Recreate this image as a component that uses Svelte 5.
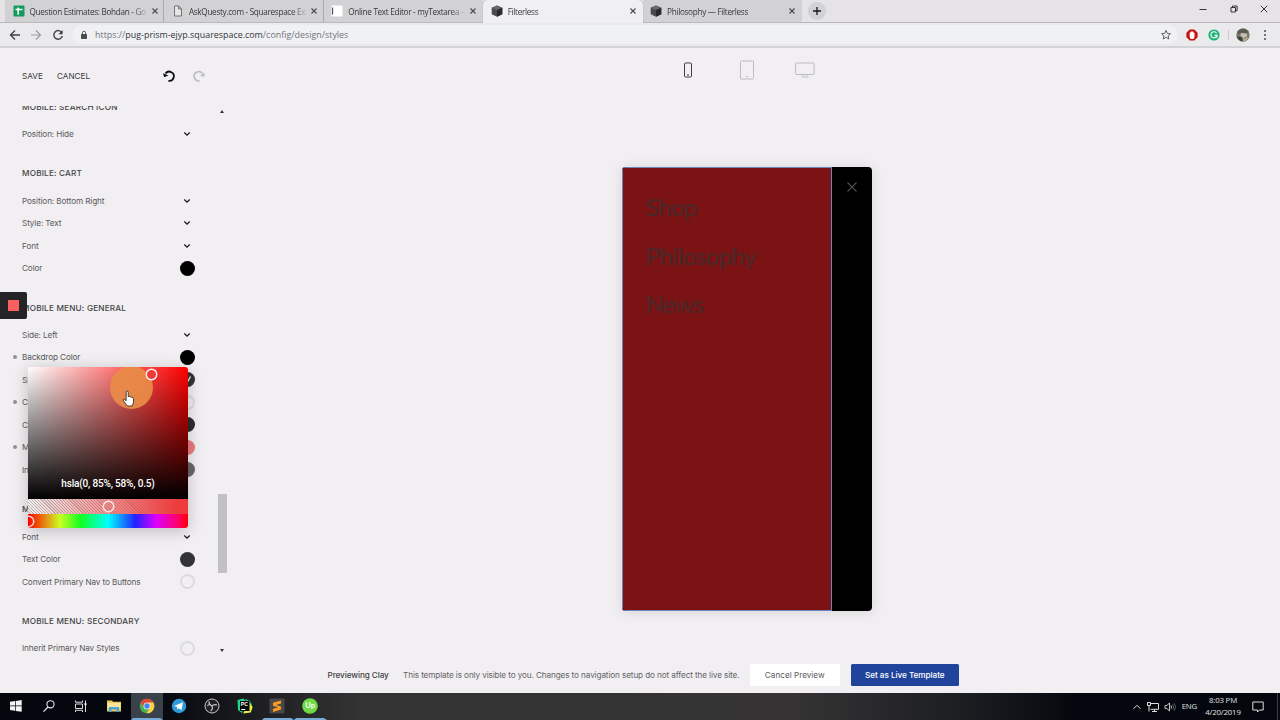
<script lang="ts">
  type Row = {
    label: string;
    kind: "arrow" | "swatch" | "check";
    color?: string;
    changed?: boolean;
    ticked?: boolean;
  };

  type Section = { title: string; rows: Row[] };

  const tabs = [
    { title: "Question Estimates: Bohdan - Go", icon: "sheets" },
    { title: "AskQuesty.com - Squarespace Ex", icon: "file" },
    { title: "Online Text Editor - myTextarea -", icon: "blank" },
    { title: "Filterless", icon: "cube", active: true },
    { title: "Philosophy — Filterless", icon: "cube" },
  ];

  const sections: Section[] = [
    {
      title: "Mobile: Search Icon",
      rows: [{ label: "Position: Hide", kind: "arrow" }],
    },
    {
      title: "Mobile: Cart",
      rows: [
        { label: "Position: Bottom Right", kind: "arrow" },
        { label: "Style: Text", kind: "arrow" },
        { label: "Font", kind: "arrow" },
        { label: "Color", kind: "swatch", color: "#000" },
      ],
    },
    {
      title: "Mobile Menu: General",
      rows: [
        { label: "Side: Left", kind: "arrow" },
        { label: "Backdrop Color", kind: "swatch", color: "#000", changed: true },
        { label: "Sl", kind: "swatch", color: "#333235", ticked: true },
        { label: "C", kind: "check", changed: true },
        { label: "C", kind: "swatch", color: "#2d2c2f" },
        { label: "M", kind: "swatch", color: "#ea7a7f", changed: true },
        { label: "In", kind: "swatch", color: "#68676a" },
      ],
    },
    {
      title: "M",
      rows: [
        { label: "Font", kind: "arrow" },
        { label: "Text Color", kind: "swatch", color: "#333235" },
        { label: "Convert Primary Nav to Buttons", kind: "check" },
      ],
    },
    {
      title: "Mobile Menu: Secondary",
      rows: [{ label: "Inherit Primary Nav Styles", kind: "check" }],
    },
  ];

  const menu = ["Shop", "Philosophy", "News"];

  const apps = [
    { name: "start" },
    { name: "search" },
    { name: "tasks" },
    { name: "explorer" },
    { name: "chrome", running: true, focused: true },
    { name: "telegram" },
    { name: "obs" },
    { name: "pycharm" },
    { name: "sublime", running: true },
    { name: "upwork", running: true },
  ];
</script>

<div class="screen">
  <div class="tab-bar">
    {#each tabs as tab}
      <div class="tab" class:active={tab.active}>
        <svg class="favicon" viewBox="0 0 12 12">
          {#if tab.icon === "sheets"}
            <rect x="0.5" y="0.5" width="11" height="11" rx="1" fill="#129a5c" />
            <path d="M2.5 4.5h7M5.2 2.5v7.3" stroke="#fff" stroke-width="1.5" />
          {:else if tab.icon === "file"}
            <path d="M2.5 1h4.3l2.7 2.8V11h-7zM6.6 1v3h3" fill="#e6e6e6" stroke="#69696b" stroke-width="0.9" />
          {:else if tab.icon === "blank"}
            <rect x="0.5" y="0.5" width="11" height="11" fill="#fff" />
            <path d="M1.6 2.5v7" stroke="#222" stroke-width="0.9" />
          {:else}
            <path d="M6 0.4l5.3 2.3v6.6L6 11.7 0.7 9.3V2.7z" fill="#4a4a4c" />
            <path d="M6 0.4l5.3 2.3L6 4.9 0.7 2.7z" fill="#6b6b6d" />
            <path d="M6 4.9l5.3-2.2v6.6L6 11.7z" fill="#29292b" />
          {/if}
        </svg>
        <span class="tab-title">{tab.title}</span>
        <svg class="tab-close" viewBox="0 0 8 8">
          <path d="M1.5 1.5l5 5m0-5l-5 5" stroke="#4a4a4c" stroke-width="1.1" />
        </svg>
      </div>
    {/each}
    <div class="new-tab">
      <svg width="10" height="10" viewBox="0 0 10 10">
        <path d="M5 1v8M1 5h8" stroke="#161616" stroke-width="1.3" />
      </svg>
    </div>
    <div class="window-controls">
      <svg viewBox="0 0 8 8"><path d="M0.5 4.5h7" stroke="#222" stroke-width="0.9" /></svg>
      <svg viewBox="0 0 8 8">
        <path d="M1 2.5h4.5V7H1zM2.5 2.4V1h4.6v4.6H5.6" fill="none" stroke="#222" stroke-width="0.9" />
      </svg>
      <svg viewBox="0 0 8 8"><path d="M0.8 0.8l6.4 6.4m0-6.4L0.8 7.2" stroke="#222" stroke-width="0.9" /></svg>
    </div>
  </div>

  <div class="toolbar">
    <div class="nav-buttons">
      <svg viewBox="0 0 12 12"><path d="M11 6H1.8M6 1.5L1.5 6 6 10.5" fill="none" stroke="#414143" stroke-width="1.3" /></svg>
      <svg viewBox="0 0 12 12"><path d="M1 6h9.2M6 1.5L10.5 6 6 10.5" fill="none" stroke="#9c9c9f" stroke-width="1.2" /></svg>
      <svg viewBox="0 0 12 12">
        <path d="M9.8 3.6A4.3 4.3 0 1 0 10.3 7" fill="none" stroke="#414143" stroke-width="1.4" />
        <path d="M10.6 1v4.2H6.4z" fill="#414143" />
      </svg>
    </div>
    <div class="address">
      <svg class="lock" viewBox="0 0 8 10">
        <rect x="1" y="4" width="6" height="5" rx="0.7" fill="#4b4b4e" />
        <path d="M2.4 4.2V2.8a1.6 1.6 0 0 1 3.2 0v1.4" fill="none" stroke="#4b4b4e" stroke-width="0.9" />
      </svg>
      <span class="url">https://<b>pug-prism-ejyp.squarespace.com</b>/config/design/styles</span>
      <svg class="star" viewBox="0 0 12 12">
        <path d="M6 1.4l1.3 3 3.2.3-2.4 2.1.7 3.2L6 8.3 3.2 10l.7-3.2-2.4-2.1 3.2-.3z" fill="none" stroke="#55555a" stroke-width="0.9" />
      </svg>
    </div>
    <div class="extensions">
      <svg viewBox="0 0 12 12">
        <path d="M3.7 0.4h4.6l3.3 3.3v4.6l-3.3 3.3H3.7L0.4 8.3V3.7z" fill="#c9110f" />
        <path d="M3.7 3.5v4q0 2.6 2.4 2.6t2.4-2.6V3.7H7.4V2.6H4.8v.9z" fill="#fff" />
      </svg>
      <svg viewBox="0 0 12 12">
        <circle cx="6" cy="6" r="5.6" fill="#1bb374" />
        <path d="M8.6 4.2A3.1 3.1 0 1 0 9 6.4H6.4M9 6.3v2.4" fill="none" stroke="#fff" stroke-width="1.1" />
      </svg>
      <span class="divider"></span>
      <svg class="avatar" viewBox="0 0 14 14">
        <circle cx="7" cy="7" r="6.7" fill="#7d776a" />
        <path d="M1.5 3.5Q7-2 12.5 3.4L11 6 6 4.5 2 6z" fill="#5d5951" />
        <path d="M5 5l6 .5v3L7 10 4.5 8z" fill="#c3beb2" />
        <path d="M1 8.5l5 .5.5 4.4Q2 12.6 1 8.5z" fill="#36443a" />
        <path d="M7 10.5l5.5-1.5Q11 13.5 7 13.6z" fill="#b1a58d" />
      </svg>
      <svg class="dots" viewBox="0 0 4 12">
        <circle cx="2" cy="2" r="1" fill="#4b4b4e" />
        <circle cx="2" cy="6" r="1" fill="#4b4b4e" />
        <circle cx="2" cy="10" r="1" fill="#4b4b4e" />
      </svg>
    </div>
  </div>

  <div class="workspace">
    <aside class="sidebar">
      <div class="actions">
        <span>SAVE</span>
        <span>CANCEL</span>
        <svg class="undo" viewBox="0 0 14 14">
          <path d="M3.5 4.6A4.6 4.6 0 1 1 6.4 11.8" fill="none" stroke="#0c0c0c" stroke-width="1.8" />
          <path d="M1 4.2L2.2 8.3 6.3 6.6z" fill="#0c0c0c" />
        </svg>
        <svg class="redo" viewBox="0 0 14 14">
          <path d="M10.5 4.6A4.6 4.6 0 1 0 7.6 11.8" fill="none" stroke="#bcbbbe" stroke-width="1.6" />
          <path d="M13 3.8L12.2 8.1 8 6.6z" fill="#bcbbbe" />
        </svg>
      </div>

      <div class="tweaks">
        <div class="tweak-list">
          {#each sections as section}
            <h3>{section.title}</h3>
            {#each section.rows as row}
              <div class="row" class:changed={row.changed}>
                <span>{row.label}</span>
                {#if row.kind === "arrow"}
                  <svg class="arrow" viewBox="0 0 8 8">
                    <path d="M1.3 2.5L4 5.2l2.7-2.7" fill="none" stroke="#1b1b1d" stroke-width="1.3" />
                  </svg>
                {:else if row.kind === "swatch"}
                  <i class="swatch" style="background: {row.color}">
                    {#if row.ticked}
                      <svg viewBox="0 0 15 15"><path d="M5 7.5l2.500 2.500 3-5.500" fill="none" stroke="#fff" stroke-width="1.2" /></svg>
                    {/if}
                  </i>
                {:else}
                  <i class="check"></i>
                {/if}
              </div>
            {/each}
          {/each}
        </div>
        <div class="scrollbar">
          <i class="up"></i>
          <i class="thumb"></i>
          <i class="down"></i>
        </div>
      </div>

      <div class="picker">
        <div class="shade">
          <i class="halo"></i>
          <i class="handle"></i>
          <span>hsla(0, 85%, 58%, 0.5)</span>
        </div>
        <div class="alpha"><i class="handle"></i></div>
        <div class="hue"><i class="handle"></i></div>
        <svg class="pointer" viewBox="0 0 14 18">
          <path
            d="M4.2 9.8V2.3q0-1.3 1-1.3t1 1.3v4.2q1.1-.8 1.8.4 1.2-.6 1.8.5 1.5-.3 1.7 1.3v3.5l-1.3 3.8H5.400L1.600 11q-.8-1.300.1-1.800.9-.4 2.500 1.600z"
            fill="#fff"
            stroke="#222"
            stroke-width="0.8"
          />
        </svg>
      </div>

      <div class="recorder"><i></i></div>
    </aside>

    <main>
      <div class="devices">
        <svg width="10" height="16" viewBox="0 0 10 16">
          <rect x="1.500" y="1" width="7" height="14" rx="1" fill="none" stroke="#3f3f42" />
          <path d="M4 13h2" stroke="#3f3f42" />
        </svg>
        <svg width="14" height="20" viewBox="0 0 14 20">
          <rect x="0.500" y="1" width="13" height="18" rx="1" fill="none" stroke="#bdbcbf" />
          <path d="M6.200 16.500h1.500" stroke="#aaa9ac" />
        </svg>
        <svg class="desktop" width="20" height="16" viewBox="0 0 20 16">
          <rect x="0.600" y="1" width="18.500" height="11.500" rx="0.800" fill="none" stroke="#bdbcbf" />
          <path d="M8 13v1.800m4-1.800v1.800M6.500 15h7" fill="none" stroke="#bdbcbf" stroke-width="0.800" />
        </svg>
      </div>

      <div class="phone">
        <nav>
          {#each menu as item}
            <a href="#{item}">{item}</a>
          {/each}
        </nav>
        <div class="backdrop">
          <svg width="12" height="12" viewBox="0 0 12 12">
            <path d="M1.500 1.500l9 9m0-9l-9 9" stroke="#4e4e50" stroke-width="1.100" />
          </svg>
        </div>
      </div>
    </main>
  </div>

  <footer>
    <strong>Previewing Clay</strong>
    <p>This template is only visible to you. Changes to navigation setup do not affect the live site.</p>
    <button class="cancel">Cancel Preview</button>
    <button class="live">Set as Live Template</button>
  </footer>

  <div class="taskbar">
    {#each apps as app}
      <div class="app" class:running={app.running} class:focused={app.focused}>
        <svg viewBox="0 0 16 16">
          {#if app.name === "start"}
            <path d="M2 3.8l5-.7v4.500H2zM7.700 3l6-.9v5.500h-6zM2 8.300h5v4.500l-5-.7zM7.700 8.300h6v5.500l-6-.9z" fill="#f4f4f6" />
          {:else if app.name === "search"}
            <circle cx="9.500" cy="6.300" r="3.600" fill="none" stroke="#e6e6e8" stroke-width="1.100" />
            <path d="M7 9l-4.500 4.600" stroke="#e6e6e8" stroke-width="1.200" />
          {:else if app.name === "tasks"}
            <path d="M2.500 2.500v1.700h7V2.500M2.500 6h7v4.500h-7zM2.500 14v-1.700h7V14M12.500 2.500V14" fill="none" stroke="#dcdcde" />
            <path d="M11.500 5.200h2v2h-2z" fill="#fff" />
          {:else if app.name === "explorer"}
            <path d="M1 2.500h5l1 1.300h8v9.700H1z" fill="#efc75b" />
            <path d="M1.500 5h13v5h-13z" fill="#fae59a" />
            <path d="M3 9h10v5h-2.500v-2.500h-5V14H3z" fill="#4ba7d8" />
          {:else if app.name === "chrome"}
            <circle cx="8" cy="8" r="7.300" fill="#4daf50" />
            <path d="M1.700 4.400A7.300 7.300 0 0 1 14.400 4.500L8 5 5.500 9.500z" fill="#e5453a" />
            <path d="M14.400 4.500A7.300 7.300 0 0 1 7.600 15.300L11 9.800 9 4.500z" fill="#fbce3e" />
            <circle cx="8" cy="8" r="3.500" fill="#f2f2f2" />
            <circle cx="8" cy="8" r="2.700" fill="#4385f0" />
          {:else if app.name === "telegram"}
            <circle cx="8" cy="8" r="7.200" fill="#2d9cd8" />
            <path d="M3 8l9-3.700-1.500 8-2.700-2-1.300 1.300-.5-2.500z" fill="#fff" />
          {:else if app.name === "obs"}
            <circle cx="8" cy="8" r="7" fill="#202023" stroke="#c9c9cb" />
            <path d="M5 3.500q-.2 3 3 4.500M13 7q-3-1.200-5 1M6.600 13q2.600-1.800 1.400-5M3.500 8q1.500-3 4.500 0" fill="none" stroke="#c9c9cb" stroke-width="1.200" />
          {:else if app.name === "pycharm"}
            <path d="M0.500 2l6-1.500L9 4 5 15 1 12z" fill="#21d789" />
            <path d="M8 1l5 2 2 4-1 2-4-3z" fill="#35c8a0" />
            <path d="M12 5l3.700 4-2 5.500L6 15.500 9 10z" fill="#e8ef45" />
            <path d="M3 3h9.500v10H3z" fill="#050505" />
            <text x="3.800" y="8.300">PC</text>
            <path d="M4.200 11.500h4" stroke="#fff" />
          {:else if app.name === "sublime"}
            <rect x="0.500" y="0.500" width="15" height="15" rx="1" fill="#48484a" />
            <path d="M4 4.800L12 2.500v3L7 7l5 1.600v2.800l-8 2.500v-3L9 9.300 4 7.700z" fill="#ff9a1d" />
          {:else}
            <circle cx="8" cy="8" r="7.800" fill="#6fda44" />
            <text class="up-mark" x="3.300" y="10.300">Up</text>
          {/if}
        </svg>
      </div>
    {/each}
    <div class="tray">
      <svg width="10" height="10" viewBox="0 0 10 10"><path d="M1.500 6.800L5 3.300l3.500 3.500" fill="none" stroke="#ddd" /></svg>
      <svg width="12" height="12" viewBox="0 0 12 12">
        <path d="M3.500 2.500h8v5.800h-8M5 10.500h5M7.500 8.300v2" fill="none" stroke="#ddd" />
        <path d="M0.500 1.500h3v3h-3zM2 4.500v6" fill="none" stroke="#ddd" />
      </svg>
      <svg width="12" height="12" viewBox="0 0 12 12">
        <path d="M1 4.500h1.800L5.500 2v8L2.800 7.500H1z" fill="none" stroke="#ddd" stroke-width="0.900" />
        <path d="M7 4.500q1 1.500 0 3" fill="none" stroke="#ccc" />
        <path d="M8.700 3.300q2 2.700 0 5.400M10.300 2.300q2.500 3.700 0 7.400" fill="none" stroke="#6b6b70" stroke-width="0.800" />
      </svg>
      <span class="lang">ENG</span>
      <span class="clock">8:03 PM<br />4/20/2019</span>
      <svg width="12" height="12" viewBox="0 0 12 12"><path d="M0.800 1h10.400v8H7.500L5.500 11V9H0.800z" fill="none" stroke="#ddd" /></svg>
    </div>
  </div>
</div>

<style>
  :global(body) {
    margin: 0;
    overflow: hidden;
  }

  svg {
    display: block;
    flex: none;
  }

  .screen {
    display: flex;
    flex-direction: column;
    width: 1280px;
    height: 720px;
    background: #f1eff2;
    color: #5a595c;
    font-family: Inter, "Liberation Sans", sans-serif;
    font-size: 8.2px;
    letter-spacing: -0.12px;
  }

  .tab-bar {
    display: flex;
    flex: none;
    box-sizing: border-box;
    height: 23px;
    padding-left: 5px;
    background: #e5e3e6;
    border-bottom: 1px solid #bab9bc;
    font-family: "Open Sans", sans-serif;
    font-size: 8.2px;
    letter-spacing: -0.31px;
  }

  .tab {
    display: flex;
    align-items: center;
    box-sizing: border-box;
    width: 159.4px;
    height: 22px;
    padding: 0 6px 0 7.5px;
    background: #d2d1d3;
    border-right: 1px solid #aaa9ab;
    color: #38383a;
  }

  .tab:nth-child(3),
  .tab:nth-child(5) {
    border-right: none;
  }

  .tab.active {
    height: 23px;
    padding-bottom: 1px;
    background: #f0eff1;
    border-right: none;
    border-radius: 5px 5px 0 0;
    box-shadow: 0 0 1px #888;
    clip-path: inset(-2px -2px 0);
  }

  .favicon {
    width: 12px;
    height: 12px;
    margin-right: 5px;
  }

  .tab-title {
    flex: none;
    width: 118px;
    white-space: nowrap;
    mask-image: linear-gradient(90deg, #000 102px, transparent 120px);
  }

  .tab-close {
    width: 8px;
    height: 8px;
    margin-left: 3px;
  }

  .new-tab {
    display: flex;
    align-items: center;
    justify-content: center;
    width: 18px;
    height: 18px;
    margin: 2px 0 0 6px;
    border-radius: 50%;
    background: #d2d1d3;
  }

  .window-controls {
    display: flex;
    gap: 22.5px;
    margin-left: auto;
    padding: 5px 12px 0 0;
  }

  .window-controls svg {
    width: 8px;
    height: 8px;
  }

  .toolbar {
    display: flex;
    flex: none;
    align-items: center;
    box-sizing: border-box;
    height: 25px;
    background: #eae9ec;
    border-bottom: 2px solid #d3d2d5;
    font-family: "Open Sans", sans-serif;
    font-size: 8.9px;
    letter-spacing: 0.01px;
  }

  .nav-buttons {
    display: flex;
    gap: 9.5px;
    width: 63px;
    padding-left: 8.5px;
  }

  .nav-buttons svg {
    width: 12px;
    height: 12px;
  }

  .address {
    display: flex;
    align-items: center;
    box-sizing: border-box;
    width: 1106px;
    height: 19px;
    padding: 0 6px 0 8.5px;
    border-radius: 10px;
    background: #eff1f5;
  }

  .lock {
    width: 8px;
    height: 10px;
    margin-right: 7px;
  }

  .url {
    color: #737478;
  }

  .url b {
    color: #343437;
    font-weight: 400;
  }

  .star {
    width: 12px;
    height: 12px;
    margin-left: auto;
  }

  .extensions {
    display: flex;
    align-items: center;
    margin-left: 8.5px;
  }

  .extensions svg {
    width: 12px;
    height: 12px;
    margin-right: 9.5px;
  }

  .divider {
    width: 1px;
    height: 10px;
    margin: 0 7.5px 0 -1.5px;
    background: #c9c8cb;
  }

  .extensions .avatar {
    width: 14px;
    height: 14px;
    margin-right: 13px;
  }

  .extensions .dots {
    width: 4px;
    margin-right: 0;
  }

  .workspace {
    display: flex;
    flex: none;
    height: 608px;
  }

  .sidebar {
    position: relative;
    display: flex;
    flex-direction: column;
    width: 234px;
  }

  .actions {
    display: flex;
    align-items: center;
    flex: none;
    box-sizing: border-box;
    height: 58px;
    padding: 0 0 2px 22px;
    color: #3c3b3e;
    letter-spacing: -0.02px;
  }

  .actions span {
    width: 35px;
  }

  .undo {
    width: 14px;
    height: 14px;
    margin-left: 70px;
  }

  .redo {
    width: 14px;
    height: 14px;
    margin-left: 15.5px;
  }

  .tweaks {
    display: flex;
    flex: 1;
    min-height: 0;
    overflow: hidden;
  }

  .tweak-list {
    width: 172.5px;
    margin-top: -7.5px;
    padding: 0 22px;
  }

  h3 {
    height: 16px;
    margin: 20.3px 0 8px;
    color: #454447;
    font-size: 8.2px;
    font-weight: 500;
    letter-spacing: 0.19px;
    line-height: 16px;
    text-transform: uppercase;
    white-space: nowrap;
  }

  h3:first-child {
    margin-top: 0;
  }

  .row {
    position: relative;
    display: flex;
    align-items: center;
    justify-content: space-between;
    height: 22.5px;
    white-space: nowrap;
  }

  .row.changed::before {
    content: "";
    position: absolute;
    left: -9px;
    width: 4px;
    height: 4px;
    border-radius: 50%;
    background: #929194;
  }

  .arrow {
    width: 8px;
    height: 8px;
    margin-right: 3.5px;
  }

  .swatch,
  .check {
    box-sizing: border-box;
    width: 15px;
    height: 15px;
    border-radius: 50%;
  }

  .check {
    border: 2px solid #dbdadd;
  }

  .scrollbar {
    display: flex;
    flex-direction: column;
    align-items: center;
    width: 10px;
    margin-left: auto;
    padding: 4px 7px 0 0;
  }

  .up {
    border: 2.5px solid transparent;
    border-top: 0;
    border-bottom: 3px solid #333;
  }

  .thumb {
    width: 9px;
    height: 79px;
    margin: 381px 0 76px;
    background: #c1c0c3;
  }

  .down {
    border: 2.5px solid transparent;
    border-bottom: 0;
    border-top: 3px solid #333;
  }

  .picker {
    position: absolute;
    top: 319px;
    left: 28px;
    width: 160px;
    border-radius: 3px;
    box-shadow: 0 3px 16px rgba(0, 0, 0, 0.22);
  }

  .shade {
    position: relative;
    height: 131.5px;
    overflow: hidden;
    border-radius: 3px 3px 0 0;
    background:
      linear-gradient(to top, #000, transparent),
      linear-gradient(to right, #fff, #f00);
  }

  .shade span {
    position: absolute;
    bottom: 9.5px;
    width: 100%;
    color: #fff;
    font: 500 10px Roboto, sans-serif;
    letter-spacing: -0.17px;
    text-align: center;
  }

  .halo {
    position: absolute;
    top: -1px;
    left: 81.5px;
    width: 43px;
    height: 43px;
    border-radius: 50%;
    background: rgba(232, 140, 72, 0.92);
  }

  .handle {
    position: absolute;
    box-sizing: border-box;
    width: 11px;
    height: 11px;
    border: 1.5px solid #fff;
    border-radius: 50%;
    box-shadow: 0 0 0 0.4px #fff;
  }

  .shade .handle {
    top: 2px;
    left: 118px;
    background: #ee3b3b;
  }

  .alpha,
  .hue {
    position: relative;
    height: 15px;
    overflow: hidden;
  }

  .alpha {
    background:
      linear-gradient(to right, transparent, #ed3b3b 94%),
      repeating-linear-gradient(45deg, #f4f4f4 0 1.2px, #b0b0b0 1.6px 2.2px);
  }

  .alpha .handle {
    top: 2px;
    left: 74.5px;
  }

  .hue {
    height: 14.5px;
    border-radius: 0 0 3px 3px;
    background: linear-gradient(to right, #f00, #cf2 20%, #1f2 33%, #0ff 50%, #22f 67%, #d0f 80%, #f06 94%, #f00);
  }

  .hue .handle {
    top: 2px;
    left: -5.5px;
  }

  .pointer {
    position: absolute;
    top: 23px;
    left: 93.5px;
    width: 14px;
    height: 18px;
  }

  .recorder {
    position: absolute;
    top: 244px;
    left: 0;
    box-sizing: border-box;
    width: 27px;
    height: 27px;
    padding: 8px;
    border-radius: 0 2px 2px 0;
    background: #242326;
  }

  .recorder i {
    display: block;
    width: 11px;
    height: 11px;
    background: #fb5f60;
  }

  main {
    display: flex;
    flex: 1;
    flex-direction: column;
    align-items: center;
    padding-right: 20px;
  }

  .devices {
    display: flex;
    align-items: center;
    gap: 46.5px;
    height: 43px;
    margin-bottom: 76px;
    padding-left: 4px;
  }

  .desktop {
    margin-left: -5px;
  }

  .phone {
    display: flex;
    width: 250px;
    height: 444px;
    overflow: hidden;
    border-radius: 4px;
    background: #000;
    box-shadow: 0 1px 14px rgba(0, 0, 0, 0.11);
  }

  nav {
    display: flex;
    flex-direction: column;
    gap: 18.5px;
    box-sizing: border-box;
    width: 210px;
    padding: 24px 23px;
    border: 1px solid #6b87b9;
    background: #7b1213;
  }

  nav a {
    color: #4e2627;
    font-family: Lato, sans-serif;
    font-size: 24px;
    letter-spacing: -0.52px;
    line-height: 30px;
    text-decoration: none;
    -webkit-text-stroke: 0.5px #4e2627;
  }

  .backdrop {
    padding: 14px;
  }

  footer {
    display: flex;
    align-items: center;
    flex: 1;
    box-sizing: border-box;
    padding: 0 0 0 327.5px;
    white-space: nowrap;
  }

  footer strong {
    width: 75.5px;
    color: #444346;
    font-weight: 500;
    letter-spacing: -0.1px;
  }

  footer p {
    width: 347px;
    margin: 0;
    color: #656467;
  }

  button {
    height: 22px;
    margin: 0;
    padding: 0;
    border: none;
    font: inherit;
    letter-spacing: 0;
  }

  .cancel {
    width: 89.5px;
    margin-right: 11px;
    background: #fff;
    color: #5c5b5e;
  }

  .live {
    width: 108.5px;
    border-radius: 1.5px;
    background: #20449b;
    color: #fff;
    font-weight: 500;
    letter-spacing: -0.05px;
  }

  .taskbar {
    display: flex;
    flex: none;
    box-sizing: border-box;
    height: 27px;
    padding-right: 2px;
    background: linear-gradient(90deg, #04070e 12%, #17181b 18%, #333334 28%, #353334 62%, #1a1c20 76%, #04080e 84%);
    color: #e2e2e4;
  }

  .app {
    display: flex;
    align-items: center;
    justify-content: center;
    box-sizing: border-box;
    width: 32.7px;
    border-left: 2px solid transparent;
    border-right: 3px solid transparent;
    border-bottom: 2px solid transparent;
    padding-top: 1px;
  }

  .app.focused {
    border-left-color: #39414b;
    background: #39414b;
  }

  .app.running {
    border-bottom-color: #76aad8;
  }

  .app svg {
    width: 16px;
    height: 16px;
  }

  .app text {
    fill: #fff;
    font: 700 5px "Liberation Sans", sans-serif;
    letter-spacing: 0;
  }

  .app .up-mark {
    font: 700 7.5px Lato, sans-serif;
  }

  .tray {
    display: flex;
    align-items: center;
    margin-left: auto;
    padding-right: 13px;
    border-right: 1px solid #3c3f44;
    font-family: "Open Sans", sans-serif;
    font-size: 7.8px;
    letter-spacing: -0.17px;
  }

  .tray svg + svg {
    margin-left: 5px;
  }

  .lang {
    margin: 0 8px 1px 6px;
  }

  .clock {
    width: 36px;
    margin: 0 11px 2px 0;
    line-height: 12px;
    text-align: center;
    white-space: nowrap;
  }
</style>
